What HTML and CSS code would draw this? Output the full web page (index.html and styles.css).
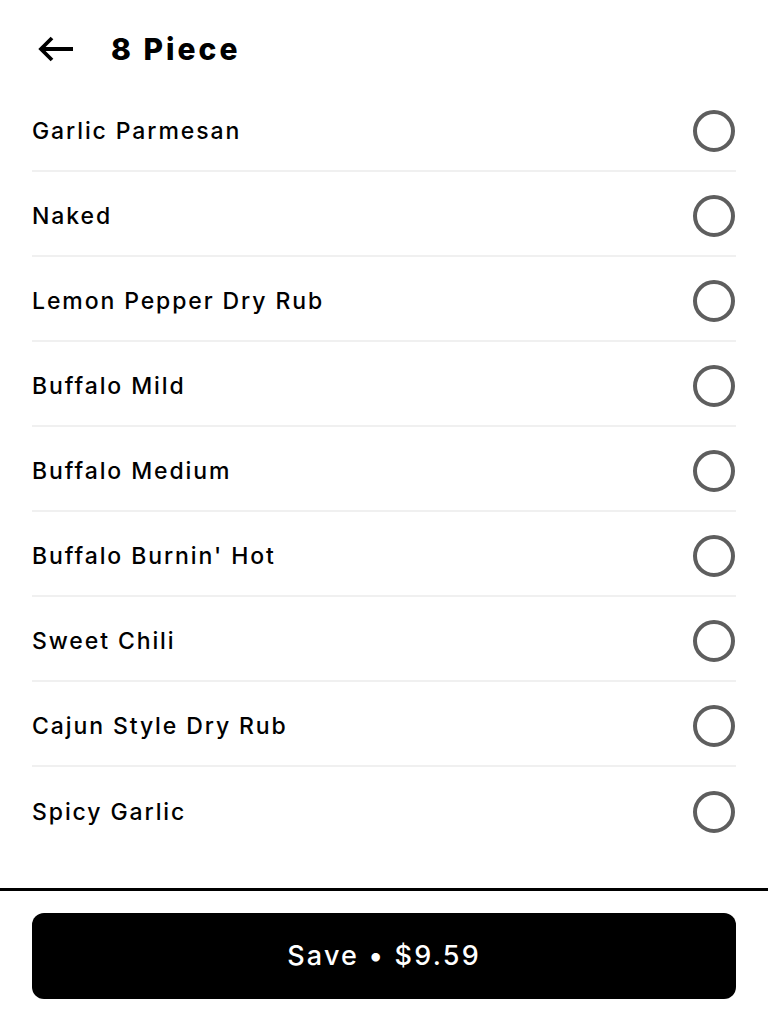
FILE: index.html
```html
<!DOCTYPE html>
<html lang="en">
<head>
  <meta charset="UTF-8">
  <meta name="viewport" content="width=device-width, initial-scale=1.0">
  <title>8 Piece</title>
  <link rel="stylesheet" href="styles.css">
</head>
<body>

  <div class="pantalla">
    <div class="cabecera">
      <svg class="flecha" width="35" height="26" viewBox="0 0 35 26">
        <path d="M35 13H3M14 2L3 13l11 11" fill="none" stroke="#000" stroke-width="3.8"/>
      </svg>
      <div class="titulo">8 Piece</div>
    </div>

    <div class="lista">
      <div class="opcion"><span>Garlic Parmesan</span><span class="radio"></span></div>
      <div class="opcion"><span>Naked</span><span class="radio"></span></div>
      <div class="opcion"><span>Lemon Pepper Dry Rub</span><span class="radio"></span></div>
      <div class="opcion"><span>Buffalo Mild</span><span class="radio"></span></div>
      <div class="opcion"><span>Buffalo Medium</span><span class="radio"></span></div>
      <div class="opcion"><span>Buffalo Burnin' Hot</span><span class="radio"></span></div>
      <div class="opcion"><span>Sweet Chili</span><span class="radio"></span></div>
      <div class="opcion"><span>Cajun Style Dry Rub</span><span class="radio"></span></div>
      <div class="opcion"><span>Spicy Garlic</span><span class="radio"></span></div>
    </div>

    <div class="pie">
      <button class="guardar">Save • $9.59</button>
    </div>
  </div>

</body>
</html>
```

FILE: styles.css
```css
body {
  margin: 0;
  font-family: 'Inter', 'Open Sans', sans-serif;
  color: #000;
  background: #fff;
}

.pantalla {
  height: 1024px;
  display: flex;
  flex-direction: column;
}

.cabecera {
  height: 87px;
  display: flex;
  align-items: center;
  padding: 10px 38px 0;
  box-sizing: border-box;
  gap: 38px;
}

.flecha {
  display: block;
}

.titulo {
  font-size: 30px;
  font-weight: 800;
  letter-spacing: 3px;
}

.lista {
  flex: 1;
  padding: 0 32px;
}

.opcion {
  height: 85px;
  display: flex;
  align-items: center;
  justify-content: space-between;
  border-bottom: 2px solid #f0f0f0;
  box-sizing: border-box;
  padding-top: 4px;
  font-size: 23px;
  font-weight: 550;
  letter-spacing: 1.9px;
}

.opcion:last-child {
  border-bottom: none;
}

.radio {
  width: 42px;
  height: 42px;
  border: 4px solid #5e5e5e;
  border-radius: 50%;
  box-sizing: border-box;
  margin-right: 1px;
}

.pie {
  border-top: 3px solid #000;
  padding: 22px 32px 25px;
}

.guardar {
  width: 100%;
  height: 86px;
  background-color: #000;
  color: #fff;
  border: none;
  border-radius: 12px;
  font-family: 'Inter', 'Open Sans', sans-serif;
  font-size: 27px;
  font-weight: 500;
  letter-spacing: 2.2px;
  padding-bottom: 3px;
}
```
